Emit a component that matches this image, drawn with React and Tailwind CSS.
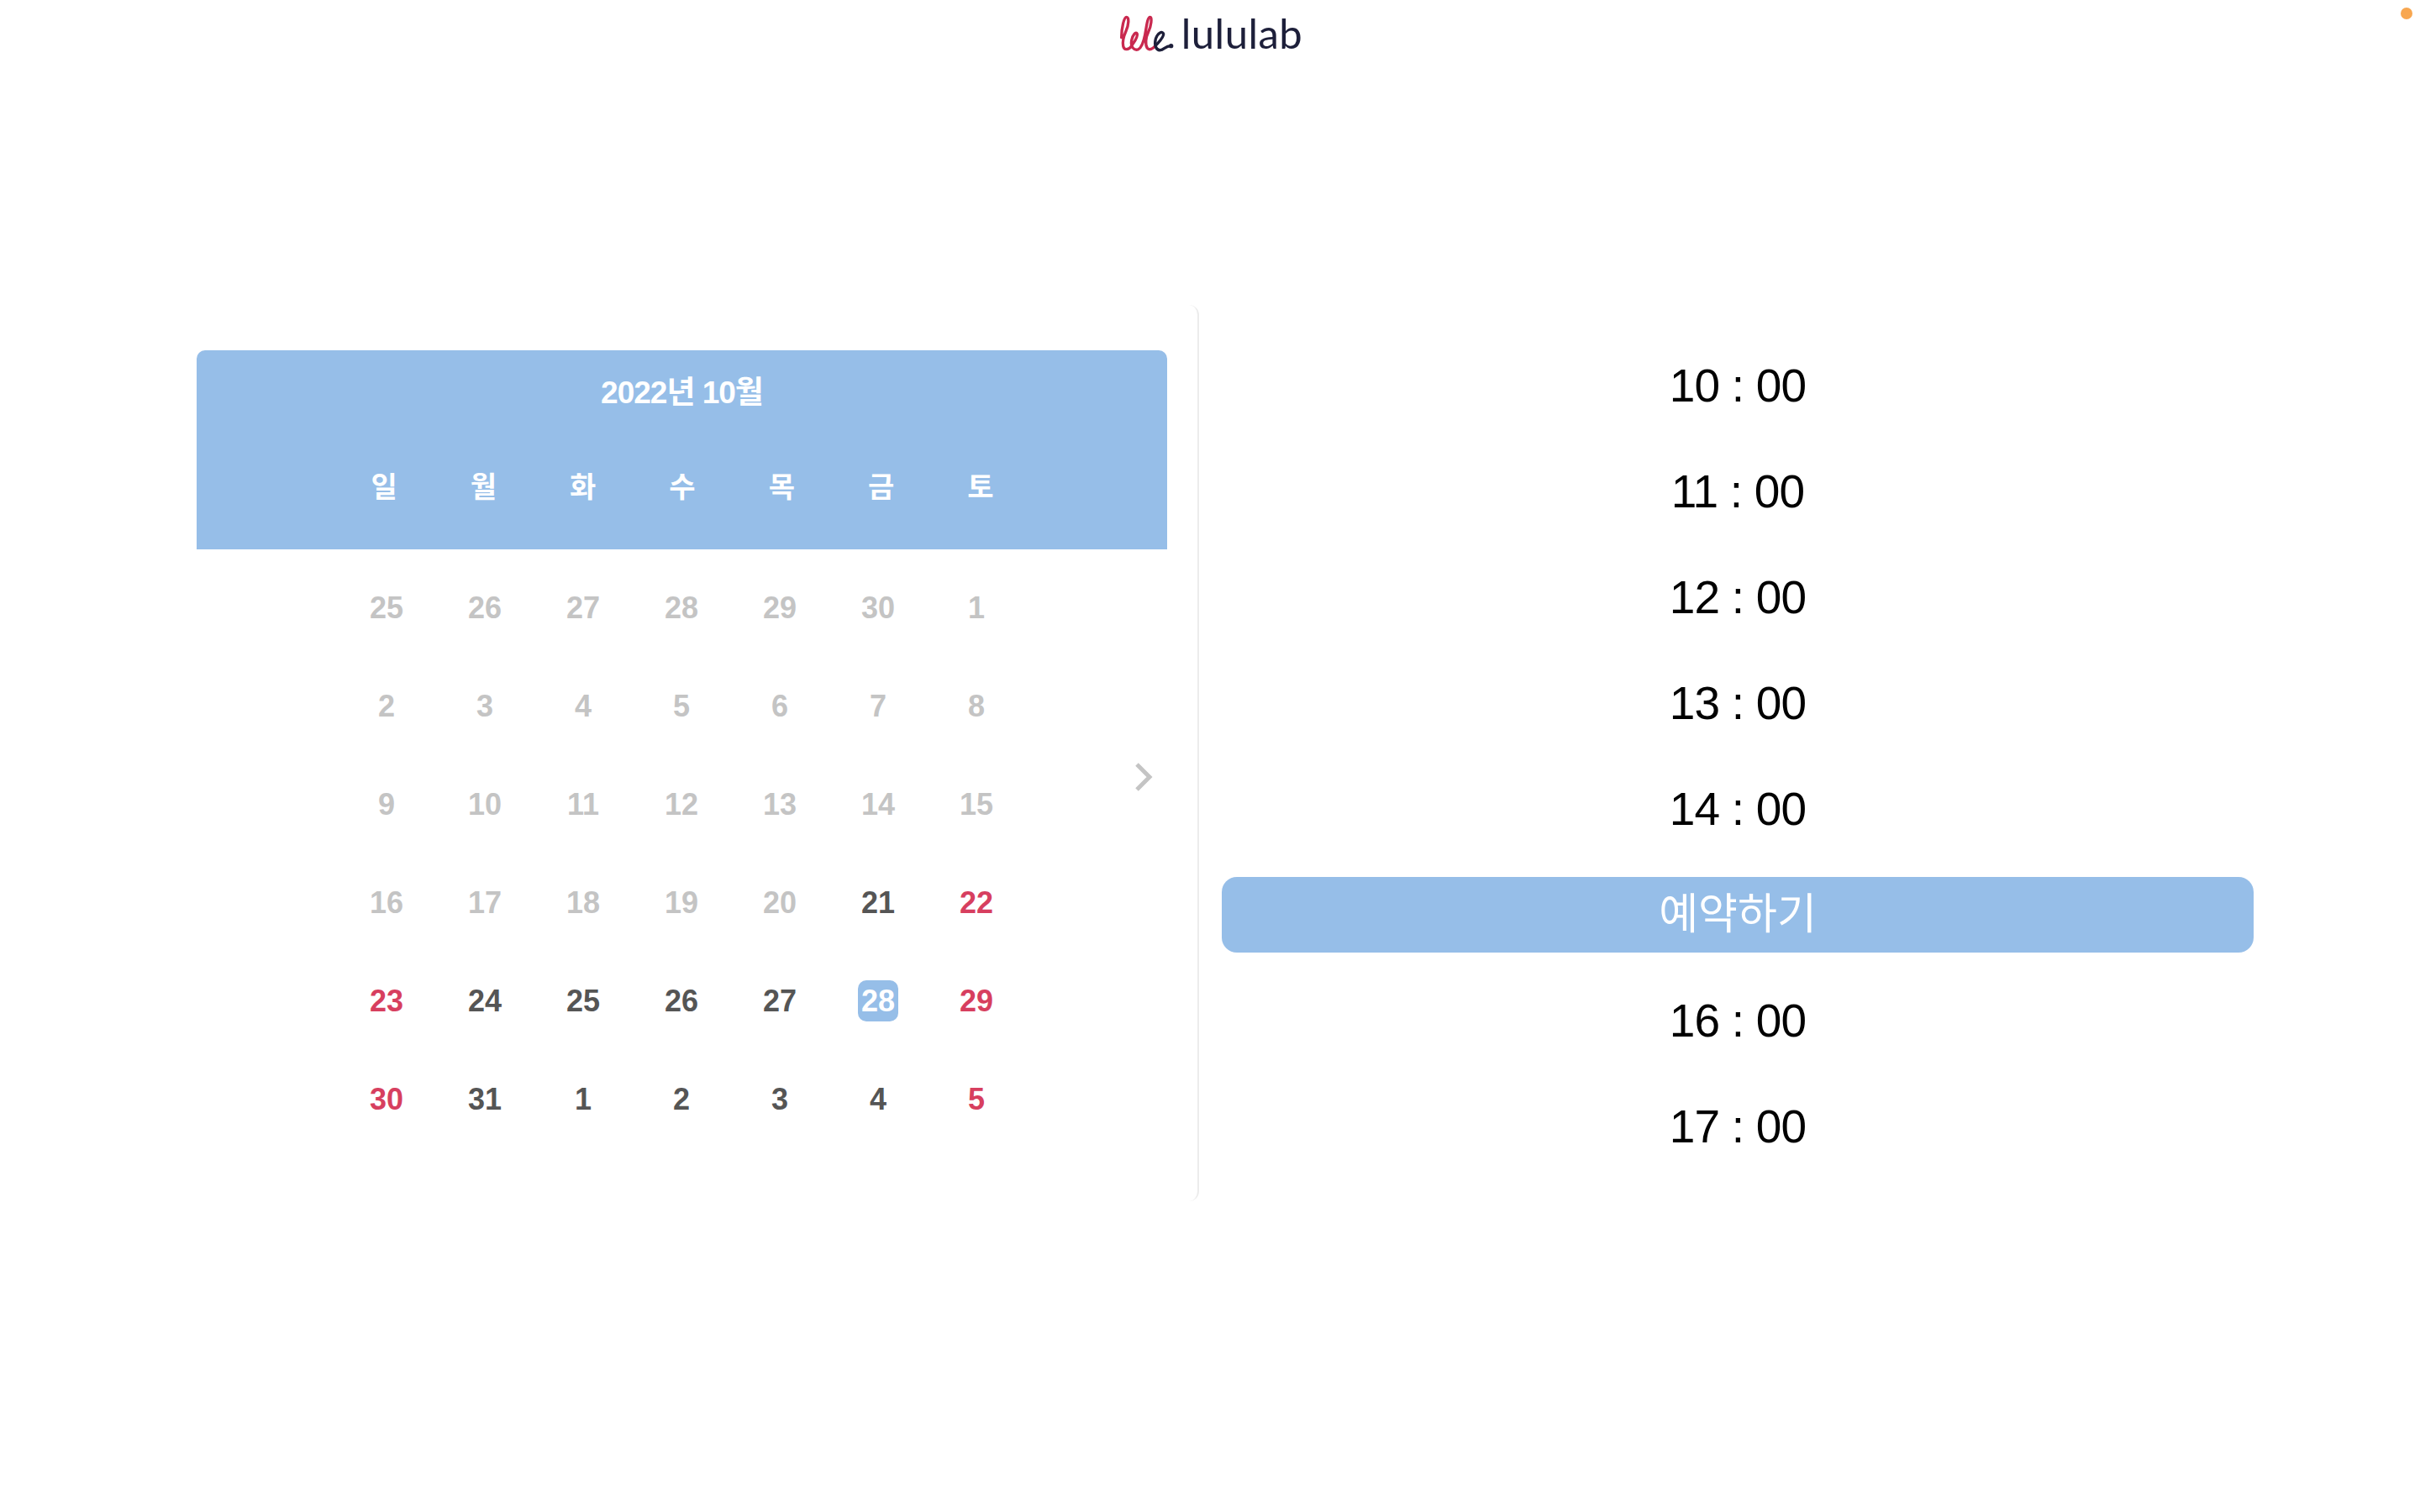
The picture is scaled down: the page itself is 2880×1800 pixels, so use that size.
const FONT = { fontFamily: '"Liberation Sans", "Noto Sans CJK KR", sans-serif' }

const WEEK = ['일', '월', '화', '수', '목', '금', '토']

// g = 지난 날짜, d = 예약 가능, r = 휴일, s = 선택
const DAYS = [
  [25, 'g'], [26, 'g'], [27, 'g'], [28, 'g'], [29, 'g'], [30, 'g'], [1, 'g'],
  [2, 'g'], [3, 'g'], [4, 'g'], [5, 'g'], [6, 'g'], [7, 'g'], [8, 'g'],
  [9, 'g'], [10, 'g'], [11, 'g'], [12, 'g'], [13, 'g'], [14, 'g'], [15, 'g'],
  [16, 'g'], [17, 'g'], [18, 'g'], [19, 'g'], [20, 'g'], [21, 'd'], [22, 'r'],
  [23, 'r'], [24, 'd'], [25, 'd'], [26, 'd'], [27, 'd'], [28, 's'], [29, 'r'],
  [30, 'r'], [31, 'd'], [1, 'd'], [2, 'd'], [3, 'd'], [4, 'd'], [5, 'r'],
]

const COLOR = {
  g: 'text-[#c4c4c4]',
  d: 'text-[#555555]',
  r: 'text-[#d73f5f]',
  s: 'h-[49px] w-[48px] rounded-[10px] bg-[#96bee8] text-white',
}

const TIMES = ['10 : 00', '11 : 00', '12 : 00', '13 : 00', '14 : 00', null, '16 : 00', '17 : 00']

function Logo() {
  return (
    <div className="flex h-[80px] items-center justify-center pr-[4px]">
      <svg width="80" height="54" viewBox="0 0 240 162" fill="none" strokeWidth="10" strokeLinecap="round">
        <path
          d="M26 95 C26 60 35 22 44 22 C54 22 52 50 42 72 C34 90 28 105 32 125 C35 142 52 140 62 125 C70 112 85 95 82 82 C78 72 66 85 62 105 C58 128 70 142 85 138 C98 132 105 110 110 85 C115 60 118 22 128 22 C136 22 132 55 122 75 C112 95 110 120 118 133 C125 142 138 135 147 125"
          stroke="#c9294f"
        />
        <path d="M147 125 C158 112 178 95 176 82 C172 70 155 78 148 100 C142 122 150 142 165 140 C178 138 182 125 203 125" stroke="#1d1f3a" />
        <circle cx="203" cy="125" r="8" fill="#1d1f3a" />
      </svg>
      <span className="mb-[2px] text-[49px] leading-none font-normal tracking-[0.5px] text-[#1d1f3a]" style={{ fontFamily: 'Lato, sans-serif' }}>
        lululab
      </span>
    </div>
  )
}

function Calendar() {
  return (
    <div className="relative h-[1067px] w-[1194px] rounded-r-xl border-r-2 border-[#ececec] pt-[54px] pr-[36px]">
      <div className="ml-[1px] rounded-t-[10px] bg-[#96bee8] text-white">
        <p className="pt-[31px] text-center text-[37px] leading-[40px] font-bold tracking-[-1px]">2022년 10월</p>
        <div className="mt-[72px] ml-[164px] grid w-[828px] grid-cols-7 pb-[54px]">
          {WEEK.map((w) => (
            <span key={w} className="text-center text-[34px] leading-[40px] font-bold">{w}</span>
          ))}
        </div>
      </div>
      <div className="mx-auto grid w-[819px] grid-cols-7 pt-[11px]">
        {DAYS.map(([n, k], i) => (
          <div key={i} className="flex h-[117px] items-center justify-center">
            <span className={`flex items-center justify-center text-[36px] font-bold ${COLOR[k]}`}>{n}</span>
          </div>
        ))}
      </div>
      <svg width="24" height="36" viewBox="0 0 24 36" fill="none" className="absolute top-[544px] left-[1116px]">
        <path d="M4 3 L19 18 L4 33" stroke="#c4c4c4" strokeWidth="5" />
      </svg>
    </div>
  )
}

function TimeList() {
  return (
    <div className="ml-[27px] flex w-[1228px] flex-col gap-[36px] pt-[51px]">
      {TIMES.map((t) =>
        t ? (
          <div key={t} className="flex h-[90px] items-center justify-center text-[55px] tracking-[-0.8px] text-black">{t}</div>
        ) : (
          <button key="btn" className="flex h-[90px] items-center justify-center rounded-[18px] bg-[#96bee8] text-[51px] text-white">
            예약하기
          </button>
        ),
      )}
    </div>
  )
}

export default function App() {
  return (
    <div className="relative h-[1800px] w-[2880px] overflow-hidden bg-white" style={FONT}>
      <span className="absolute top-[9px] left-[2857px] h-[14px] w-[14px] rounded-full bg-[#f8a750]" />
      <Logo />
      <div className="mt-[283px] flex pl-[233px]">
        <Calendar />
        <TimeList />
      </div>
    </div>
  )
}
